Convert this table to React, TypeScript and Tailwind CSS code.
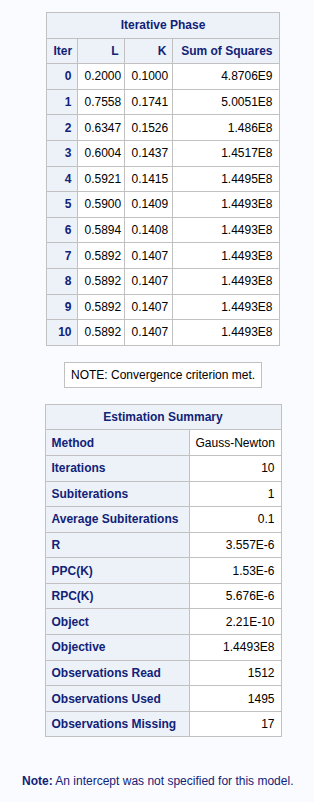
const navy = "text-[#112277]";

const iterRows: [number, string, string, string][] = [
  [0, "0.2000", "0.1000", "4.8706E9"],
  [1, "0.7558", "0.1741", "5.0051E8"],
  [2, "0.6347", "0.1526", "1.486E8"],
  [3, "0.6004", "0.1437", "1.4517E8"],
  [4, "0.5921", "0.1415", "1.4495E8"],
  [5, "0.5900", "0.1409", "1.4493E8"],
  [6, "0.5894", "0.1408", "1.4493E8"],
  [7, "0.5892", "0.1407", "1.4493E8"],
  [8, "0.5892", "0.1407", "1.4493E8"],
  [9, "0.5892", "0.1407", "1.4493E8"],
  [10, "0.5892", "0.1407", "1.4493E8"],
];

const summary: [string, string][] = [
  ["Method", "Gauss-Newton"],
  ["Iterations", "10"],
  ["Subiterations", "1"],
  ["Average Subiterations", "0.1"],
  ["R", "3.557E-6"],
  ["PPC(K)", "1.53E-6"],
  ["RPC(K)", "5.676E-6"],
  ["Object", "2.21E-10"],
  ["Objective", "1.4493E8"],
  ["Observations Read", "1512"],
  ["Observations Used", "1495"],
  ["Observations Missing", "17"],
];

const hd = `bg-[#edf2f9] ${navy} font-bold border border-[#c1c1c1] px-[6px] h-[25.6px] p-0 whitespace-nowrap`;
const dt = "bg-white text-black border border-[#c1c1c1] px-[6px] h-[25.6px] p-0 text-right whitespace-nowrap";

export default function App() {
  return (
    <div
      className="min-h-screen bg-[#fafbfe] text-[12px] leading-[14px] pt-3"
      style={{ fontFamily: '"Liberation Sans", Arial, sans-serif' }}
    >
      <div className="flex flex-col items-center pl-3">
        {/* Iterative Phase */}
        <table className="border-collapse table-fixed w-[232px]">
          <colgroup>
            <col className="w-[31px]" />
            <col className="w-[47px]" />
            <col className="w-[48px]" />
            <col className="w-[106px]" />
          </colgroup>
          <thead>
            <tr>
              <th colSpan={4} className={`${hd} text-center`}>
                Iterative Phase
              </th>
            </tr>
            <tr>
              <th className={`${hd} text-left`}>Iter</th>
              <th className={`${hd} text-right`}>L</th>
              <th className={`${hd} text-right`}>K</th>
              <th className={`${hd} text-right`}>Sum of Squares</th>
            </tr>
          </thead>
          <tbody>
            {iterRows.map(([i, l, k, s]) => (
              <tr key={i}>
                <th className={`${hd} text-right`}>{i}</th>
                <td className={dt}>{l}</td>
                <td className={dt}>{k}</td>
                <td className={dt}>{s}</td>
              </tr>
            ))}
          </tbody>
        </table>

        {/* Note box */}
        <div className="mt-4 w-[198px] h-[26px] bg-white border border-[#c1c1c1] px-[6px] flex items-center text-black whitespace-nowrap">
          NOTE: Convergence criterion met.
        </div>

        {/* Estimation Summary */}
        <table className="border-collapse table-fixed w-[236px] mt-4">
          <colgroup>
            <col className="w-[144px]" />
            <col className="w-[92px]" />
          </colgroup>
          <thead>
            <tr>
              <th colSpan={2} className={`${hd} text-center`}>
                Estimation Summary
              </th>
            </tr>
          </thead>
          <tbody>
            {summary.map(([label, value]) => (
              <tr key={label}>
                <th className={`${hd} text-left`}>{label}</th>
                <td className={dt}>{value}</td>
              </tr>
            ))}
          </tbody>
        </table>
      </div>

      <p className={`mt-[37px] pl-[22px] ${navy} whitespace-nowrap`}>
        <span className="font-bold">Note:</span> An intercept was not specified for this model.
      </p>
    </div>
  );
}
